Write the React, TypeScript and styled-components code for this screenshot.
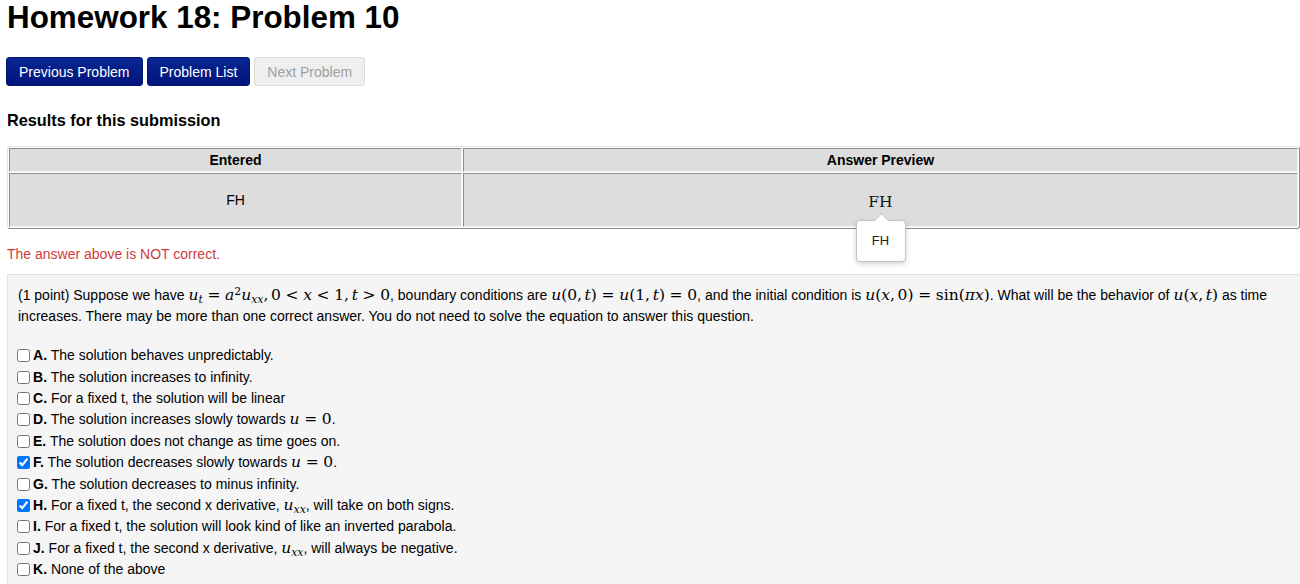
import styled, { createGlobalStyle } from 'styled-components'

const GlobalStyle = createGlobalStyle`
  html, body {
    margin: 0;
    padding: 0;
    background: #fff;
  }
  body {
    font-family: "Liberation Sans", Arial, sans-serif;
    font-size: 14px;
    color: #000;
    overflow: hidden;
  }
`

const Page = styled.div`
  width: 1293px;
  padding-left: 7px;
`

const Title = styled.h1`
  margin: 0;
  font-size: 31.4px;
  line-height: 36px;
  font-weight: bold;
`

const NavBar = styled.div`
  display: flex;
  gap: 4px;
  margin: 21px 0 0 -1px;
`

const NavButton = styled.button<{ $disabled?: boolean }>`
  height: 29px;
  padding: 0 12px;
  font-family: "Liberation Sans", Arial, sans-serif;
  font-size: 14px;
  border-radius: 3px;
  border: 1px solid ${(p) => (p.$disabled ? '#dcdcdc' : '#001670')};
  background: ${(p) =>
    p.$disabled ? '#efefef' : 'linear-gradient(#0a2693, #00157c)'};
  color: ${(p) => (p.$disabled ? '#a0a0a0' : '#fff')};
  cursor: ${(p) => (p.$disabled ? 'default' : 'pointer')};
`

const SectionHeading = styled.h2`
  margin: 24px 0 0;
  font-size: 16.3px;
  line-height: 20px;
  font-weight: bold;
`

const ResultsTable = styled.table`
  width: 100%;
  margin-top: 16px;
  border-collapse: separate;
  border-spacing: 1px;
  border: 1px solid;
  border-color: #e4e4e4 #8c8c8c #8c8c8c #e4e4e4;
  border-radius: 3px;
`

const HeadCell = styled.th<{ $w?: string }>`
  width: ${(p) => p.$w || 'auto'};
  background: #dddddd;
  padding: 4px;
  line-height: 14px;
  font-size: 14px;
  font-weight: bold;
  text-align: center;
  border: 1px solid;
  border-color: #8c8c8c #f2f2f2 #f2f2f2 #8c8c8c;
`

const BodyCell = styled.td`
  background: #dddddd;
  padding: 19px 4px;
  line-height: 14px;
  font-size: 14px;
  text-align: center;
  border: 1px solid;
  border-color: #8c8c8c #f2f2f2 #f2f2f2 #8c8c8c;
`

const PreviewWrap = styled.span`
  position: relative;
  top: 2px;
  display: inline-block;
  font-family: "DejaVu Serif", "Liberation Serif", serif;
  font-size: 15.5px;
  line-height: 14px;
  color: #111;
`

const Tooltip = styled.div`
  position: absolute;
  top: calc(100% + 11px);
  left: 50%;
  transform: translateX(-50%);
  width: 50px;
  height: 42px;
  box-sizing: border-box;
  display: flex;
  align-items: center;
  justify-content: center;
  background: #fff;
  border: 1px solid #c4c4c4;
  border-radius: 4px;
  box-shadow: 0 2px 5px rgba(0, 0, 0, 0.18);
  font-family: "Liberation Sans", Arial, sans-serif;
  font-size: 13px;
  color: #222;
  z-index: 2;

  &::before {
    content: '';
    position: absolute;
    top: -6px;
    left: 50%;
    width: 10px;
    height: 10px;
    margin-left: -5px;
    background: #fff;
    border-top: 1px solid #c4c4c4;
    border-left: 1px solid #c4c4c4;
    transform: rotate(45deg);
  }
`

const Incorrect = styled.div`
  margin-top: 15px;
  line-height: 20px;
  color: #cf3b3b;
`

const ProblemBox = styled.div`
  margin-top: 10px;
  padding: 10px 10px 12px;
  background: #f5f5f5;
  border-top: 1px solid #e3e3e3;
  border-left: 1px solid #e3e3e3;
  line-height: 21px;
`

const OptionList = styled.div`
  margin-top: 18px;
  margin-left: -1px;
`

const Option = styled.label`
  display: flex;
  align-items: center;
  height: 21.4px;
  white-space: nowrap;

  input {
    width: 13px;
    height: 13px;
    margin: 0 3px 0 0;
  }
`

const M = styled.span`
  font-family: "DejaVu Serif", "Liberation Serif", serif;
  font-size: 15.5px;
  white-space: nowrap;
  line-height: 0;
`

const V = styled.i`
  font-style: italic;
`

const Op = styled.span`
  margin: 0 0.3em;
`

const Sub = styled.sub`
  font-size: 70%;
  font-style: italic;
  vertical-align: -0.25em;
  line-height: 0;
`

const Sup = styled.sup`
  font-size: 70%;
  vertical-align: 0.5em;
  line-height: 0;
`

const Comma = styled.span`
  margin-right: 0.17em;
`

const options: { key: string; checked?: boolean; text: React.ReactNode }[] = [
  { key: 'A', text: 'The solution behaves unpredictably.' },
  { key: 'B', text: 'The solution increases to infinity.' },
  { key: 'C', text: 'For a fixed t, the solution will be linear' },
  {
    key: 'D',
    text: (
      <>
        The solution increases slowly towards{' '}
        <M>
          <V>u</V>
          <Op>=</Op>0
        </M>
        .
      </>
    ),
  },
  { key: 'E', text: 'The solution does not change as time goes on.' },
  {
    key: 'F',
    checked: true,
    text: (
      <>
        The solution decreases slowly towards{' '}
        <M>
          <V>u</V>
          <Op>=</Op>0
        </M>
        .
      </>
    ),
  },
  { key: 'G', text: 'The solution decreases to minus infinity.' },
  {
    key: 'H',
    checked: true,
    text: (
      <>
        For a fixed t, the second x derivative,{' '}
        <M>
          <V>u</V>
          <Sub>xx</Sub>
        </M>
        , will take on both signs.
      </>
    ),
  },
  {
    key: 'I',
    text: 'For a fixed t, the solution will look kind of like an inverted parabola.',
  },
  {
    key: 'J',
    text: (
      <>
        For a fixed t, the second x derivative,{' '}
        <M>
          <V>u</V>
          <Sub>xx</Sub>
        </M>
        , will always be negative.
      </>
    ),
  },
  { key: 'K', text: 'None of the above' },
]

export default function App() {
  return (
    <>
      <GlobalStyle />
      <Page>
        <Title>Homework 18: Problem 10</Title>
        <NavBar>
          <NavButton>Previous Problem</NavButton>
          <NavButton>Problem List</NavButton>
          <NavButton $disabled>Next Problem</NavButton>
        </NavBar>

        <SectionHeading>Results for this submission</SectionHeading>
        <ResultsTable>
          <thead>
            <tr>
              <HeadCell $w="443px">Entered</HeadCell>
              <HeadCell>Answer Preview</HeadCell>
            </tr>
          </thead>
          <tbody>
            <tr>
              <BodyCell>FH</BodyCell>
              <BodyCell>
                <PreviewWrap>
                  FH
                  <Tooltip>FH</Tooltip>
                </PreviewWrap>
              </BodyCell>
            </tr>
          </tbody>
        </ResultsTable>
        <Incorrect>The answer above is NOT correct.</Incorrect>

        <ProblemBox>
          <div>
            (1 point) Suppose we have{' '}
            <M>
              <V>u</V>
              <Sub>t</Sub>
              <Op>=</Op>
              <V>a</V>
              <Sup>2</Sup>
              <V>u</V>
              <Sub>xx</Sub>
              <Comma>,</Comma>0<Op>&lt;</Op>
              <V>x</V>
              <Op>&lt;</Op>1<Comma>,</Comma>
              <V>t</V>
              <Op>&gt;</Op>0
            </M>
            , boundary conditions are{' '}
            <M>
              <V>u</V>(0<Comma>,</Comma>
              <V>t</V>)<Op>=</Op>
              <V>u</V>(1<Comma>,</Comma>
              <V>t</V>)<Op>=</Op>0
            </M>
            , and the initial condition is{' '}
            <M>
              <V>u</V>(<V>x</V>
              <Comma>,</Comma>0)<Op>=</Op>sin(<V>π</V>
              <V>x</V>)
            </M>
            . What will be the behavior of{' '}
            <M>
              <V>u</V>(<V>x</V>
              <Comma>,</Comma>
              <V>t</V>)
            </M>{' '}
            as time increases. There may be more than one correct answer. You
            do not need to solve the equation to answer this question.
          </div>
          <OptionList>
            {options.map((o) => (
              <Option key={o.key}>
                <input type="checkbox" defaultChecked={o.checked} />
                <span>
                  <b>{o.key}.</b> {o.text}
                </span>
              </Option>
            ))}
          </OptionList>
        </ProblemBox>
      </Page>
    </>
  )
}
